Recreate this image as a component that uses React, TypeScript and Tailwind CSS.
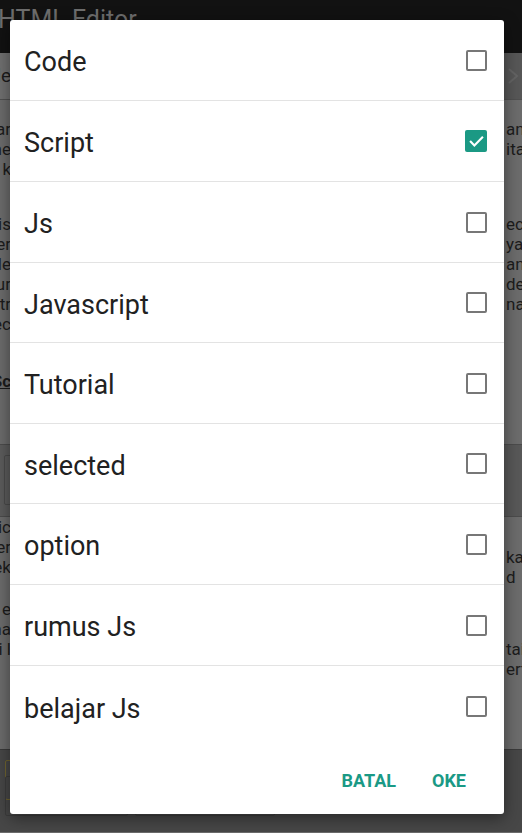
import { useState } from "react";

const options = [
    { label: "Code", h: "h-[81px]", checked: false },
    { label: "Script", h: "h-[81px]", checked: true },
    { label: "Js", h: "h-[81px]", checked: false },
    { label: "Javascript", h: "h-[80px]", checked: false },
    { label: "Tutorial", h: "h-[81px]", checked: false },
    { label: "selected", h: "h-[80px]", checked: false },
    { label: "option", h: "h-[81px]", checked: false },
    { label: "rumus Js", h: "h-[81px]", checked: false },
    { label: "belajar Js", h: "h-[81px]", checked: false },
];

const Checkbox = ({ checked }: { checked: boolean }) =>
    checked ? (
        <div className="flex h-[22px] w-[22px] items-center justify-center rounded-[2px] bg-[#1b9984]">
            <svg width="17" height="17" viewBox="0 0 24 24" fill="none">
                <path d="M4 12.5l5 5L20 6.5" stroke="#fff" strokeWidth="3" strokeLinecap="square" />
            </svg>
        </div>
    ) : (
        <div className="h-[21px] w-[21px] rounded-[2px] border-[2.5px] border-[#777]" />
    );

// fragments of the page behind the dim layer
const Lines = ({ items, className = "" }: { items: string[]; className?: string }) => (
    <div className={`flex flex-col text-[17px] leading-[20px] text-[#1c1c1c] whitespace-nowrap ${className}`}>
        {items.map((t, i) => (
            <div key={i} className="flex justify-end h-[20px]">
                {t}
            </div>
        ))}
    </div>
);

const RLines = ({ items, className = "" }: { items: string[]; className?: string }) => (
    <div className={`flex flex-col text-[17px] leading-[20px] text-[#1c1c1c] whitespace-nowrap ${className}`}>
        {items.map((t, i) => (
            <div key={i} className="h-[20px]">
                {t}
            </div>
        ))}
    </div>
);

export default function App() {
    const [items, setItems] = useState(options);

    const toggle = (idx: number) =>
        setItems((prev) => prev.map((o, i) => (i === idx ? { ...o, checked: !o.checked } : o)));

    return (
        <div className="relative h-[833px] w-[522px] overflow-hidden bg-[#6c6c6c] font-['Roboto',sans-serif]">
            {/* App bar */}
            <div className="h-[53px] bg-[#121212] -ml-[2px] pt-[6px] text-[25px] leading-[28px] text-[#6e6e6e]">
                HTML Editor
            </div>

            {/* Toolbar */}
            <div className="flex h-[47px] justify-between border-b border-[#505050]">
                <div className="flex w-[11px] items-center justify-end overflow-hidden bg-[#707070] text-[19px] text-[#1c1c1c]">
                    Kode
                </div>
                <div className="flex w-[18px] items-center justify-center bg-[#575757]">
                    <svg width="14" height="20" viewBox="0 0 14 20" fill="none">
                        <path d="M3 3l8 7-8 7" stroke="#646464" strokeWidth="2" />
                    </svg>
                </div>
            </div>

            {/* Content */}
            <div className="flex h-[344px] justify-between">
                <div className="w-[11px] overflow-hidden pt-[19px]">
                    <Lines items={["kar", "the", "k"]} />
                    <Lines className="mt-[35px]" items={["nis", "per", "le", "tur", "tr", "ec"]} />
                    <div className="mt-[37px] flex justify-end text-[17px] font-bold leading-[20px] text-[#1c1c1c] underline">
                        Sc
                    </div>
                </div>
                <div className="w-[18px] overflow-hidden pt-[19px] pl-[2px]">
                    <RLines items={["an", "ita"]} />
                    <RLines className="mt-[55px]" items={["ec", "ya", "an", "de", "na"]} />
                </div>
            </div>

            {/* Input band */}
            <div className="flex h-[73px] justify-between border-y border-[#4c4c4c] bg-[#5c5c5c]">
                <div className="mt-[10px] ml-[4px] h-[50px] w-[20px] rounded-[2px] border border-[#4a4a4a]" />
                <div className="w-[18px] bg-[#585858]" />
            </div>

            <div className="flex h-[232px] justify-between">
                <div className="w-[11px] overflow-hidden">
                    <Lines items={["ic", "er", "ek"]} />
                    <Lines className="mt-[22px]" items={["e", "na", "i l"]} />
                </div>
                <div className="w-[18px] overflow-hidden pt-[30px] pl-[2px]">
                    <RLines items={["ka", " d"]} />
                    <RLines className="mt-[52px]" items={["tai", "ert"]} />
                </div>
            </div>

            {/* Bottom bar */}
            <div className="flex h-[83px] items-start gap-[7px] border-t border-[#3a3a3a] bg-[#474747] pl-[5px] pt-[10px]">
                <div className="h-[40px] w-[12px] rounded-[2px] border border-[#6f6430]" />
            </div>
            <div className="absolute bottom-[17px] left-[5px] flex gap-[7px]">
                <div className="h-[40px] w-[123px] rounded-[2px] border border-[#3c3c3c]" />
                <div className="h-[40px] w-[140px] rounded-[2px] border border-[#3c3c3c]" />
            </div>

            {/* Dialog */}
            <div className="absolute left-[10px] top-[20px] flex h-[794px] w-[494px] flex-col rounded-[3px] bg-white shadow-[0_4px_16px_rgba(0,0,0,0.45)]">
                {items.map((o, i) => (
                    <div
                        key={o.label}
                        onClick={() => toggle(i)}
                        className={`flex ${o.h} shrink-0 items-center justify-between pl-[14px] pr-[17px] ${i < items.length - 1 ? "border-b border-[#e3e3e3]" : ""}`}
                    >
                        <span className="mt-[5px] text-[27px] leading-none text-[#212121]">{o.label}</span>
                        <Checkbox checked={o.checked} />
                    </div>
                ))}
                <div className="flex flex-1 items-center justify-end gap-[36px] pr-[38px] text-[18px] font-bold text-[#1a9985]">
                    <span>BATAL</span>
                    <span>OKE</span>
                </div>
            </div>
        </div>
    );
}
